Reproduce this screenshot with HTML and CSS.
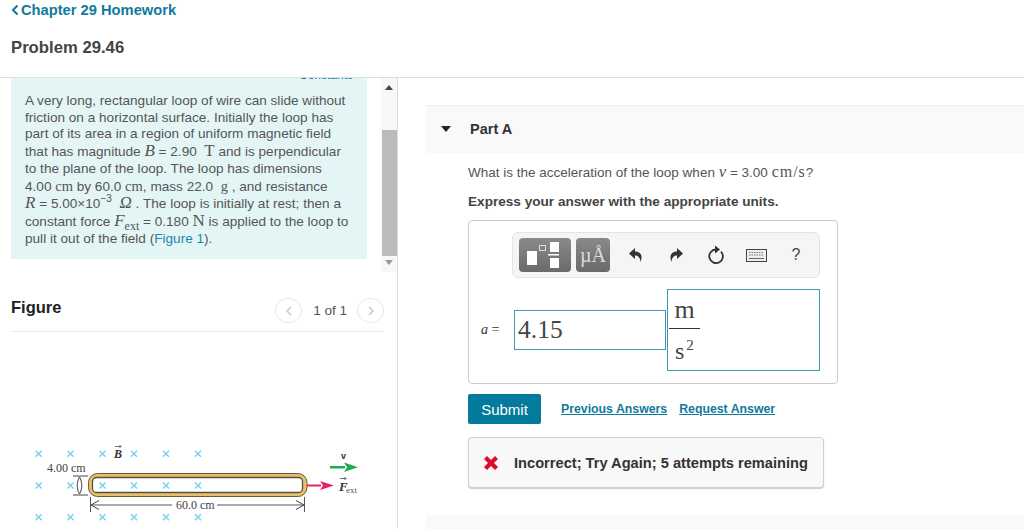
FILE: index.html
```html
<!DOCTYPE html>
<html lang="en">
<head>
  <meta charset="UTF-8" />
  <title>Problem 29.46</title>
  <link rel="stylesheet" href="styles.css">
</head>
<body>

  <header class="top">
    <a class="back" href="#"><svg class="back-icon" viewBox="0 0 8 12" width="8" height="12"><path d="M6.500 1.500 2 6l4.500 4.500" fill="none" stroke="#0f7a9c" stroke-width="2"/></svg>Chapter 29 Homework</a>
    <h1>Problem 29.46</h1>
  </header>

  <div class="main">
    <aside class="left">
      <div class="scroll-area">
        <div class="scroll-content">
          <div class="intro">
            <div class="constants">Constants</div>
            <p>A very long, rectangular loop of wire can slide without<br>
            friction on a horizontal surface. Initially the loop has<br>
            part of its area in a region of uniform magnetic field<br>
            that has magnitude <span class="m big"><i>B</i></span> = 2.90 &nbsp;<span class="m big">T</span> and is perpendicular<br>
            to the plane of the loop. The loop has dimensions<br>
            4.00 <span class="m">cm</span> by 60.0 <span class="m">cm</span>, mass 22.0 &nbsp;<span class="m">g</span> , and resistance<br>
            <span class="m big"><i>R</i></span> = 5.00&times;10<sup>&minus;3</sup> &nbsp;<span class="m big"><i>&Omega;</i></span> . The loop is initially at rest; then a<br>
            constant force <span class="m big"><i>F</i></span><sub class="m">ext</sub> = 0.180 <span class="m big">N</span> is applied to the loop to<br>
            pull it out of the field (<a href="#">Figure 1</a>).</p>
          </div>
        </div>
        <div class="scrollbar">
          <div class="arrow-up"></div>
          <div class="thumb"></div>
          <div class="arrow-down"></div>
        </div>
      </div>

      <div class="figure-head">
        <h2>Figure</h2>
        <div class="pager">
          <span class="circle"><svg viewBox="0 0 8 12" width="8" height="12"><path d="M6 2 2 6l4 4" fill="none" stroke="#ccc" stroke-width="1.600"/></svg></span>
          <span class="count">1 of 1</span>
          <span class="circle"><svg viewBox="0 0 8 12" width="8" height="12"><path d="M2 2l4 4-4 4" fill="none" stroke="#ccc" stroke-width="1.600"/></svg></span>
        </div>
      </div>

      <svg class="diagram" viewBox="0 440 397 89" width="397" height="89">
        <defs>
          <g id="cross"><path d="M-3-3 3 3M3-3-3 3" stroke="#6fd0ee" stroke-width="1.300"/></g>
        </defs>
        <rect x="88.500" y="473.500" width="218.500" height="23" rx="9" fill="#e8c068" stroke="#6a5a3a"/>
        <rect x="92.500" y="477.500" width="210" height="15" rx="4" fill="#fff" stroke="#55504a" stroke-width="1.300"/>

        <use href="#cross" x="38.700" y="453.700"/><use href="#cross" x="70.500" y="453.700"/><use href="#cross" x="102.500" y="453.700"/><use href="#cross" x="134" y="453.700"/><use href="#cross" x="166" y="453.700"/><use href="#cross" x="198" y="453.700"/>
        <use href="#cross" x="38.700" y="485.500"/><use href="#cross" x="70.500" y="485.500"/><use href="#cross" x="102.500" y="485.500"/><use href="#cross" x="134" y="485.500"/><use href="#cross" x="166" y="485.500"/><use href="#cross" x="198" y="485.500"/>
        <use href="#cross" x="38.700" y="517.300"/><use href="#cross" x="70.500" y="517.300"/><use href="#cross" x="102.500" y="517.300"/><use href="#cross" x="134" y="517.300"/><use href="#cross" x="166" y="517.300"/><use href="#cross" x="198" y="517.300"/>

        <path d="M73 476h15M73 495h15" stroke="#444" fill="none"/>
        <path d="M79.500 477c-3 5-3 12 0 17c3-5 3-12 0-17z" stroke="#444" fill="none"/>
        <text class="dia-label" x="47" y="472">4.00 cm</text>

        <path d="M90.500 497v15M304.500 497v15M91 505h81M217 505h87" stroke="#555" fill="none"/>
        <path d="M99 500.500l-8 4.500 8 4.500M296 500.500l8 4.500-8 4.500" stroke="#444" fill="none"/>
        <text class="dia-label" x="176" y="509">60.0 cm</text>

        <path d="M307 484.500h14v2h-14z" fill="#e8245c"/>
        <path d="M320 481l14 4.500-14 4.500 3-4.500z" fill="#e8245c"/>
        <path d="M330 466h15v2.500h-15z" fill="#22a94f"/>
        <path d="M344 462.500l14 4.700-14 4.700 3-4.700z" fill="#22a94f"/>
        <text class="dia-v" x="341" y="459">v</text>

        <text class="dia-vec" x="114" y="458">B</text>
        <path d="M115 446.500h6m-1.500-1.500 1.500 1.500-1.500 1.500" stroke="#333" stroke-width=".7" fill="none"/>
        <text class="dia-vec dia-f" x="339" y="491">F</text>
        <path d="M340 478.500h6m-1.500-1.500 1.500 1.500-1.500 1.500" stroke="#333" stroke-width=".7" fill="none"/>
        <text class="dia-sub" x="346" y="493">ext</text>
      </svg>
    </aside>

    <main class="right">
      <div class="part-head">
        <span class="caret"></span>
        <h3>Part A</h3>
      </div>

      <div class="part-body">
        <p class="question">What is the acceleration of the loop when <span class="m big"><i>v</i></span> = 3.00 <span class="m units">cm/s</span>?</p>
        <p class="instr">Express your answer with the appropriate units.</p>

        <div class="answer-box">
          <div class="toolbar">
            <div class="tool-btn tool-wide">
              <svg viewBox="0 0 52 34" width="52" height="34">
                <rect x="8" y="13" width="10" height="14" fill="#fff"/>
                <rect x="20.500" y="7.500" width="6" height="5" fill="none" stroke="#ddd"/>
                <rect x="31" y="4" width="9" height="10" fill="#fff"/>
                <rect x="29" y="16" width="11" height="1.500" fill="#fff"/>
                <rect x="31" y="20" width="9" height="10" fill="#fff"/>
              </svg>
            </div>
            <div class="tool-btn tool-unit">&micro;&Aring;</div>
            <div class="tool-icons">
              <svg viewBox="0 0 16 16" width="16" height="16"><path d="M7 1 1 6.500 7 12V8.500c3 0 5 1.500 5.500 6.500C15 9 13 4.500 7 4.500z" fill="#333"/></svg>
              <svg viewBox="0 0 16 16" width="16" height="16"><path d="M9 1l6 5.500L9 12V8.500c-3 0-5 1.500-5.500 6.500C1 9 3 4.500 9 4.500z" fill="#333"/></svg>
              <svg viewBox="0 0 18 20" width="18" height="20"><path d="M9 4.500a6.800 6.800 0 1 0 5 2.100" fill="none" stroke="#333" stroke-width="1.800"/><path d="M8 .5 13 4.500 8 8.500z" fill="#333"/></svg>
              <svg viewBox="0 0 21 13" width="21" height="13"><rect x=".5" y=".5" width="20" height="12" fill="#eee" stroke="#444"/><path d="M3 3.500h15M3 6h15" stroke="#777" stroke-dasharray="1.500 1"/><path d="M3 9.500h15" stroke="#666"/></svg>
              <span class="help">?</span>
            </div>
          </div>

          <div class="answer-row">
            <span class="var"><i>a</i> =</span>
            <div class="value-input">4.15</div>
            <div class="unit-input">
              <div class="frac">
                <span class="num">m</span>
                <span class="den">s<sup>2</sup></span>
              </div>
            </div>
          </div>
        </div>

        <div class="actions">
          <button class="submit">Submit</button>
          <a href="#">Previous Answers</a>
          <a href="#">Request Answer</a>
        </div>

        <div class="feedback">
          <svg viewBox="0 0 14 14" width="14" height="14"><path d="M3 0 7 4l4-4 3 3-4 4 4 4-3 3-4-4-4 4-3-3 4-4-4-4z" fill="#dc0a2d"/></svg>
          <span>Incorrect; Try Again; 5 attempts remaining</span>
        </div>
      </div>

      <div class="part-next"></div>
    </main>
  </div>

</body>
</html>
```

FILE: styles.css
```css
* {
  box-sizing: border-box;
}

body {
  margin: 0;
  height: 529px;
  overflow: hidden;
  background: #fff;
  color: #444;
  font-family: "Liberation Sans", Arial, sans-serif;
  font-size: 14px;
}

a {
  color: #0f7a9c;
  text-decoration: none;
}

.top {
  height: 78px;
  padding: 0 11px;
  border-bottom: 1px solid #ddd;
}

.back {
  display: flex;
  align-items: center;
  gap: 2px;
  height: 20px;
  font-size: 14.700px;
  font-weight: bold;
}

.top h1 {
  margin: 18px 0 0 0;
  font-size: 16.700px;
  line-height: 20px;
  color: #444;
}

.main {
  display: flex;
  height: 451px;
}

.left {
  width: 398px;
  flex: none;
  border-right: 1px solid #ddd;
}

.scroll-area {
  display: flex;
  height: 194px;
  overflow: hidden;
}

.scroll-content {
  width: 381px;
  padding: 0 14px 0 11px;
  overflow: hidden;
}

.intro {
  margin-top: -10px;
  height: 191px;
  padding: 0 14px;
  background: #e4f5f6;
}

.constants {
  height: 14px;
  line-height: 14px;
  font-size: 12px;
  text-align: right;
  color: #0f7a9c;
}

.intro p {
  margin: 0;
  padding-top: 11px;
  font-size: 13.600px;
  line-height: 16.700px;
  white-space: nowrap;
  color: #555;
}

.intro a {
  color: #1a87a8;
}

.m {
  font-family: "Liberation Serif", serif;
  font-size: 14.500px;
}

.big {
  font-size: 17px;
}

.units {
  font-size: 16px;
  letter-spacing: 1px;
}

sup {
  font-size: 10px;
  line-height: 0;
}

sub.m {
  font-size: 12px;
  line-height: 0;
}

.scrollbar {
  width: 16px;
  display: flex;
  flex-direction: column;
  align-items: center;
  background: #f8f8f8;
}

.arrow-up {
  margin: 7px 0 40px 0;
  border-left: 4px solid transparent;
  border-right: 4px solid transparent;
  border-bottom: 5px solid #444;
}

.thumb {
  width: 15px;
  height: 126px;
  background: #bbb;
}

.arrow-down {
  margin-top: 4px;
  border-left: 4px solid transparent;
  border-right: 4px solid transparent;
  border-top: 5px solid #999;
}

.figure-head {
  display: flex;
  align-items: center;
  justify-content: space-between;
  height: 60px;
  margin: 0 13px 0 11px;
  padding: 12px 0 0 0;
  border-bottom: 1px solid #e8e8e8;
}

.figure-head h2 {
  margin: 0;
  font-size: 16.500px;
  color: #222;
}

.pager {
  display: flex;
  align-items: center;
  margin-top: 6px;
}

.circle {
  display: flex;
  align-items: center;
  justify-content: center;
  width: 27px;
  height: 25px;
  border: 1px solid #e8e8e8;
  border-radius: 50%;
}

.count {
  margin: 0 10px 0 11px;
  font-size: 13.500px;
  color: #555;
}

.diagram {
  display: block;
  margin-top: 108px;
}

.dia-label {
  font-family: "Liberation Serif", serif;
  font-size: 12px;
  fill: #444;
}

.dia-v {
  font-family: "Liberation Sans", sans-serif;
  font-weight: bold;
  font-size: 9px;
  fill: #333;
}

.dia-vec {
  font-family: "Liberation Serif", serif;
  font-weight: bold;
  font-style: italic;
  font-size: 12px;
  fill: #333;
}

.dia-f {
  font-size: 13px;
}

.dia-sub {
  font-family: "Liberation Serif", serif;
  font-size: 9px;
  fill: #555;
}

.right {
  flex: 1;
  display: flex;
  flex-direction: column;
  padding: 27px 0 0 28px;
}

.part-head {
  display: flex;
  align-items: center;
  height: 48px;
  padding: 0 0 2px 15px;
  background: #f9f9f9;
  border-top: 1px solid #eee;
}

.caret {
  border-left: 5px solid transparent;
  border-right: 5px solid transparent;
  border-top: 6px solid #222;
  margin-right: 19px;
}

.part-head h3 {
  margin: 0;
  font-size: 14.500px;
  color: #333;
}

.part-body {
  padding-left: 42px;
  flex: 1;
}

.question {
  margin: 9px 0 0 0;
  line-height: 20px;
  font-size: 13.500px;
  color: #555;
}

.instr {
  margin: 9px 0 0 0;
  line-height: 20px;
  font-weight: bold;
  font-size: 13.600px;
  color: #444;
}

.answer-box {
  width: 370px;
  height: 164px;
  margin-top: 8px;
  padding: 11px 17px 0 12px;
  border: 1px solid #ccc;
  border-radius: 4px;
}

.toolbar {
  display: flex;
  align-items: center;
  gap: 5px;
  width: 308px;
  height: 46px;
  margin-left: 31px;
  padding-left: 6px;
  background: #f5f5f5;
  border: 1px solid #e4e4e4;
  border-radius: 6px;
}

.tool-btn {
  display: flex;
  align-items: center;
  justify-content: center;
  height: 34px;
  border-radius: 4px;
  background: linear-gradient(#8a8a8a, #6a6a6a);
}

.tool-wide {
  width: 52px;
}

.tool-unit {
  width: 34px;
  font-family: "Liberation Serif", serif;
  font-size: 20px;
  color: #ddd;
}

.tool-icons {
  display: grid;
  grid-template-columns: repeat(5, 40px);
  justify-items: center;
  align-items: center;
  margin-left: 1px;
}

.help {
  font-size: 16px;
  color: #444;
}

.answer-row {
  display: flex;
  align-items: center;
  margin-top: 11px;
}

.var {
  width: 33px;
  font-family: "Liberation Serif", serif;
  font-size: 14px;
  color: #333;
}

.value-input {
  width: 152px;
  height: 40px;
  padding-left: 3px;
  border: 1px solid #3e97b5;
  font-family: "Liberation Serif", serif;
  font-size: 25.500px;
  line-height: 37px;
  color: #444;
}

.unit-input {
  width: 153px;
  height: 82px;
  margin-left: 1px;
  padding-left: 1px;
  border: 1px solid #3e97b5;
}

.frac {
  display: flex;
  flex-direction: column;
  width: 31px;
  margin-top: 6px;
  font-family: "Liberation Serif", serif;
  font-size: 26px;
  color: #444;
}

.num {
  height: 33px;
  line-height: 28px;
  text-align: center;
  border-bottom: 1px solid #333;
}

.den {
  height: 40px;
  line-height: 44px;
  padding-left: 6px;
  font-size: 24px;
}

.den sup {
  margin-left: 2px;
  font-size: 15px;
}

.actions {
  display: flex;
  align-items: center;
  gap: 12px;
  margin-top: 10px;
}

.actions a {
  font-weight: bold;
  font-size: 12.300px;
  text-decoration: underline;
}

.submit {
  width: 73px;
  height: 30px;
  margin-right: 8px;
  padding: 0;
  border: none;
  border-radius: 2px;
  background: #047b9c;
  color: #fff;
  font-family: inherit;
  font-size: 15px;
}

.feedback {
  display: flex;
  align-items: center;
  gap: 16px;
  width: 356px;
  height: 51px;
  margin-top: 13px;
  padding-left: 15px;
  background: #f8f8f8;
  border: 1px solid #d0d0d0;
  border-radius: 4px;
  box-shadow: 0 1px 1px #ccc;
  font-weight: bold;
  font-size: 14.650px;
  color: #333;
}

.part-next {
  height: 14px;
  flex: none;
  background: #f9f9f9;
}
```
